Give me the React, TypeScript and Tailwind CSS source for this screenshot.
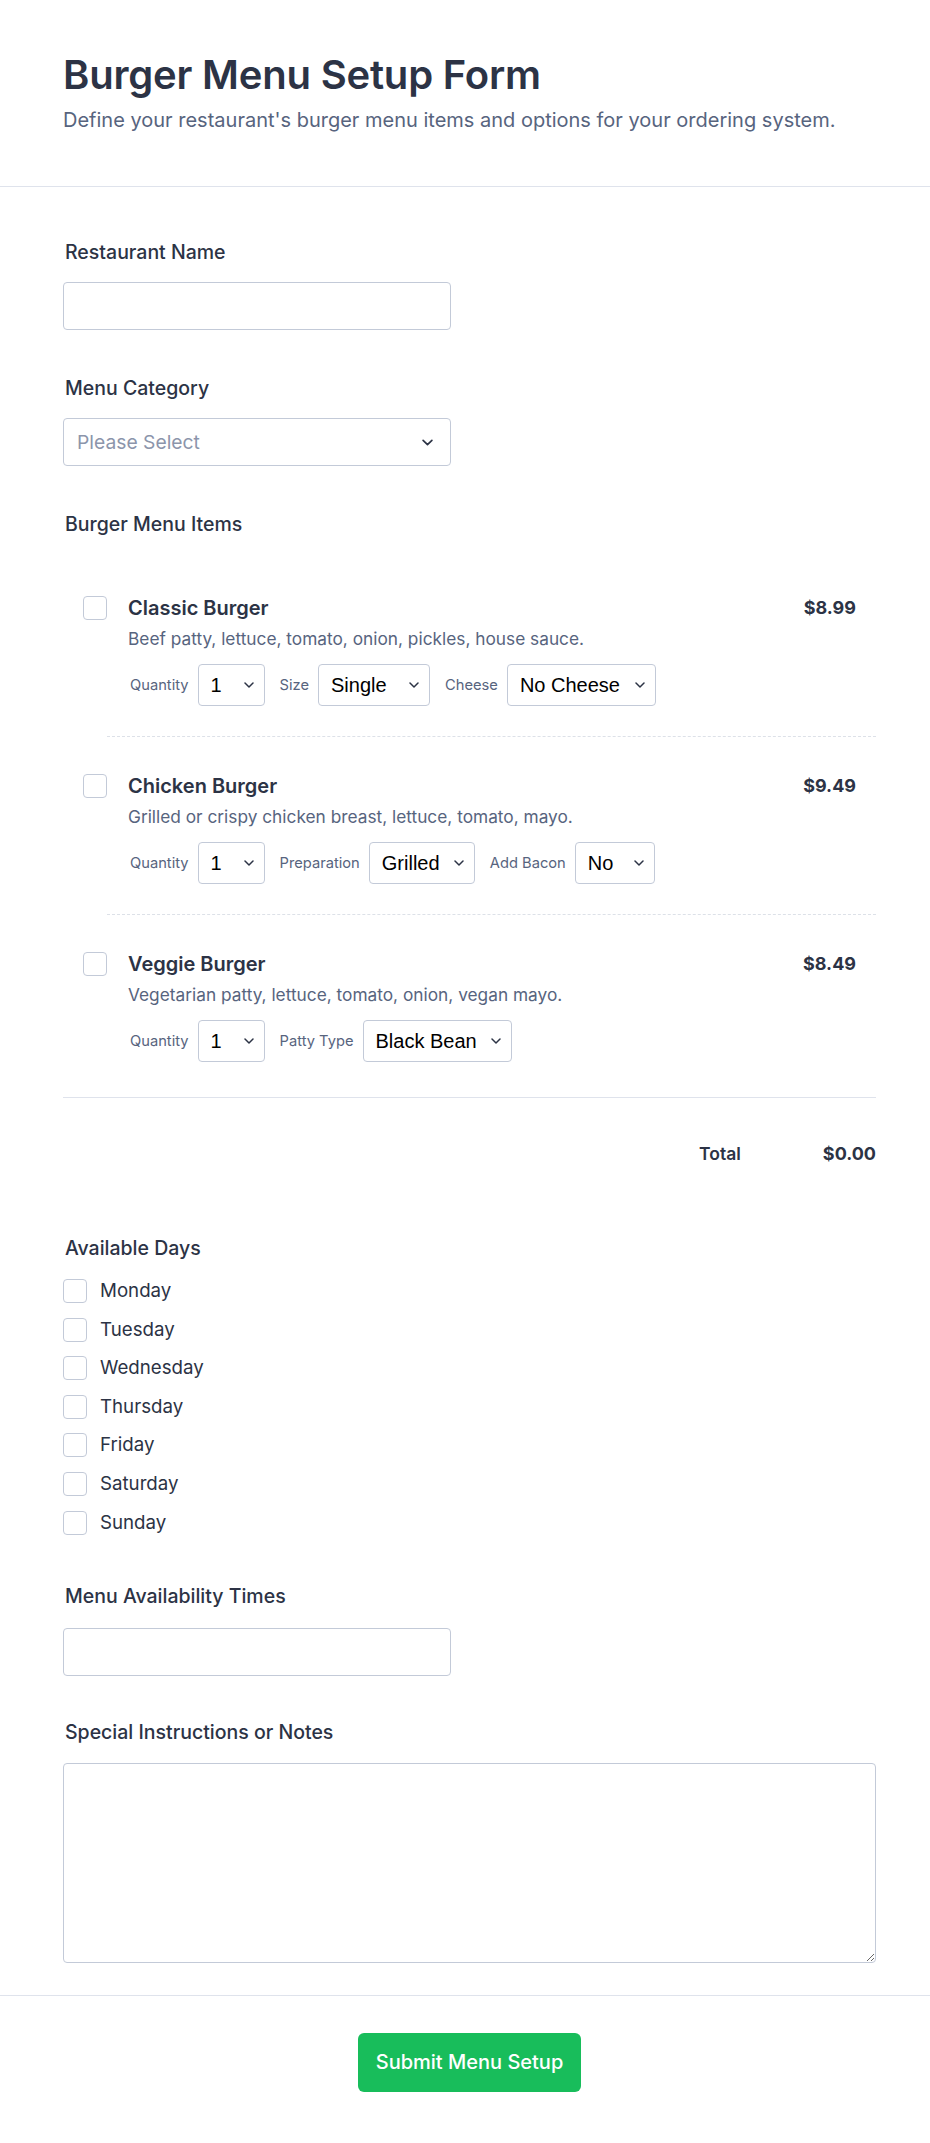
import React from 'react'

const inter = { fontFamily: 'Inter, "Noto Sans", sans-serif' }

function Chevron({ className = 'w-[10px] h-[6px]' }: { className?: string }) {
  return (
    <svg viewBox="0 0 10 6" className={className} fill="none">
      <path d="M1 1l4 4 4-4" stroke="#2c3345" strokeWidth="1.5" strokeLinecap="round" strokeLinejoin="round" />
    </svg>
  )
}

function MiniSelect({ value, width }: { value: string; width: string }) {
  return (
    <div
      className={`${width} h-[42px] flex items-center justify-between pl-3 pr-[10px] border border-[#c3cad8] rounded-[4px] bg-white`}
    >
      <span className="text-[20px] text-black" style={{ fontFamily: '"Liberation Sans", Arial, sans-serif' }}>
        {value}
      </span>
      <Chevron />
    </div>
  )
}

function Checkbox() {
  return <div className="w-6 h-6 shrink-0 rounded-[4px] border border-[#c3cad8] bg-white" />
}

type Opt = { label: string; value: string; width: string }

const items: { name: string; desc: string; price: string; opts: Opt[] }[] = [
  {
    name: 'Classic Burger',
    desc: 'Beef patty, lettuce, tomato, onion, pickles, house sauce.',
    price: '$8.99',
    opts: [
      { label: 'Quantity', value: '1', width: 'w-[67px]' },
      { label: 'Size', value: 'Single', width: 'w-[112px]' },
      { label: 'Cheese', value: 'No Cheese', width: 'w-[149px]' },
    ],
  },
  {
    name: 'Chicken Burger',
    desc: 'Grilled or crispy chicken breast, lettuce, tomato, mayo.',
    price: '$9.49',
    opts: [
      { label: 'Quantity', value: '1', width: 'w-[67px]' },
      { label: 'Preparation', value: 'Grilled', width: 'w-[106px]' },
      { label: 'Add Bacon', value: 'No', width: 'w-[80px]' },
    ],
  },
  {
    name: 'Veggie Burger',
    desc: 'Vegetarian patty, lettuce, tomato, onion, vegan mayo.',
    price: '$8.49',
    opts: [
      { label: 'Quantity', value: '1', width: 'w-[67px]' },
      { label: 'Patty Type', value: 'Black Bean', width: 'w-[149px]' },
    ],
  },
]

const days = ['Monday', 'Tuesday', 'Wednesday', 'Thursday', 'Friday', 'Saturday', 'Sunday']

function Label({ children }: { children: React.ReactNode }) {
  return <div className="pl-[2px] text-[19.5px] leading-6 font-medium text-[#2c3345]">{children}</div>
}

export default function App() {
  return (
    <div className="w-[930px] min-h-[2143px] bg-white" style={inter}>
      {/* Header */}
      <div className="pl-[63px] pt-[52px] pb-[52px] border-b border-[#dfe3ec]">
        <h1 className="text-[40px] leading-[46px] font-semibold text-[#2c3345] tracking-[-0.2px]">
          Burger Menu Setup Form
        </h1>
        <p className="mt-2 text-[20px] leading-7 text-[#57647e]">
          Define your restaurant's burger menu items and options for your ordering system.
        </p>
      </div>

      {/* Form body */}
      <div className="pl-[63px] pr-[54px]">
        <div className="pt-[53px]">
          <Label>Restaurant Name</Label>
          <input
            type="text"
            className="mt-[18px] block w-[388px] h-12 px-3 border border-[#c3cad8] rounded-[4px] text-[18px] outline-none"
          />

          <div className="mt-[46px]">
            <Label>Menu Category</Label>
          </div>
          <div className="mt-[18px] w-[388px] h-12 flex items-center justify-between pl-[13px] pr-[17px] border border-[#c3cad8] rounded-[4px]">
            <span className="text-[19.3px] text-[#8c95ab]">Please Select</span>
            <Chevron className="w-[11px] h-[7px]" />
          </div>

          <div className="mt-[46px]">
            <Label>Burger Menu Items</Label>
          </div>

          {/* Items */}
          <div className="mt-[60px]">
            {items.map((item, i) => (
              <div key={item.name}>
                <div className="flex items-start px-5">
                  <Checkbox />
                  <div className="ml-[21px] flex-1">
                    <div className="text-[20px] leading-6 font-semibold text-[#2c3345]">{item.name}</div>
                    <div className="mt-[7px] text-[17.3px] leading-6 text-[#57647e]">{item.desc}</div>
                    <div className="mt-[13px] flex items-center gap-[13px]">
                      {item.opts.map((o) => (
                        <div key={o.label} className="flex items-center gap-[9px]">
                          <span className="pl-[2px] text-[14.7px] text-[#57647e]">{o.label}</span>
                          <MiniSelect value={o.value} width={o.width} />
                        </div>
                      ))}
                    </div>
                  </div>
                  <div className="text-[18px] leading-6 font-bold text-[#2c3345]">{item.price}</div>
                </div>
                {i < items.length - 1 ? (
                  <div className="ml-[44px] mt-[30px] mb-[37px] border-t border-dashed border-[#dde1e8]" />
                ) : (
                  <div className="mt-[35px] border-t border-[#dfe3ec]" />
                )}
              </div>
            ))}
          </div>

          {/* Total */}
          <div className="mt-[44px] flex justify-end items-center text-[#2c3345]">
            <span className="text-[17.5px] leading-6 font-semibold">Total</span>
            <span className="ml-[82px] text-[18px] leading-6 font-bold">$0.00</span>
          </div>

          {/* Days */}
          <div className="mt-[70px]">
            <Label>Available Days</Label>
          </div>
          <div className="mt-[19px] flex flex-col gap-[14.6px]">
            {days.map((d) => (
              <div key={d} className="flex items-center">
                <Checkbox />
                <span className="ml-[13px] text-[18.7px] leading-6 text-[#2c3345]">{d}</span>
              </div>
            ))}
          </div>

          <div className="mt-[49px]">
            <Label>Menu Availability Times</Label>
          </div>
          <input
            type="text"
            className="mt-5 block w-[388px] h-12 px-3 border border-[#c3cad8] rounded-[4px] text-[18px] outline-none"
          />

          <div className="mt-[44px]">
            <Label>Special Instructions or Notes</Label>
          </div>
          <textarea className="mt-[19px] block w-full h-[200px] px-3 py-2 border border-[#c3cad8] rounded-[4px] text-[18px] outline-none" />
        </div>
      </div>

      {/* Footer */}
      <div className="mt-8 border-t border-[#dfe3ec] pt-[37px] pb-[50px] pl-[63px] pr-[54px] flex justify-center">
        <button
          type="button"
          className="w-[223px] h-[59px] rounded-[6px] bg-[#18bd5b] text-white text-[20px] font-medium"
        >
          Submit Menu Setup
        </button>
      </div>
    </div>
  )
}
